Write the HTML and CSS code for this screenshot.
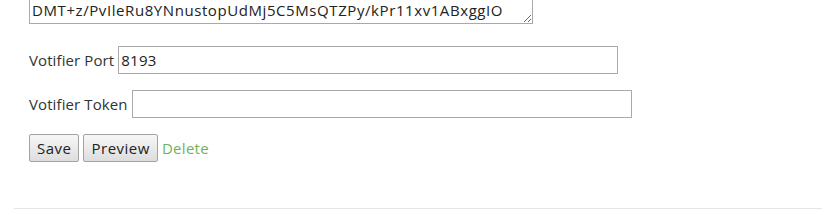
FILE: index.html
```html
<!DOCTYPE html>
<html lang="en">
<head>
    <meta charset="UTF-8">
    <meta name="viewport" content="width=device-width, initial-scale=1.0">
    <title>Server Settings</title>
    <link rel="stylesheet" href="styles.css">
</head>
<body>
    <div class="page">
        <form class="server-form">
            <textarea class="key-box" name="votifier_key">MIIBIjANBgkqhkiG9w0BAQEFAAOCAQ8AMIIBCgKCAQEAq
hT3kW9vXbR2mJ+eQfLpN7sYcZ0uKdA4gVt1oHxE8iB5
w6nRjL2yUeCqF3pMvG9aZsT0bNk/7xDhIo1Wr4tYlQe
DMT+z/PvIleRu8YNnustopUdMj5C5MsQTZPy/kPr11xv1ABxggIO</textarea>

            <div class="field">
                <label for="port">Votifier Port</label>
                <input type="text" id="port" class="text-input" value="8193">
            </div>

            <div class="field">
                <label for="token">Votifier Token</label>
                <input type="text" id="token" class="text-input" value="">
            </div>

            <div class="actions">
                <button type="button" class="btn">Save</button>
                <button type="button" class="btn">Preview</button>
                <a href="#" class="delete-link">Delete</a>
            </div>
        </form>
        <hr class="divider">
    </div>
</body>
</html>
```

FILE: styles.css
```css
body {
    font-family: "Open Sans", Arial, sans-serif;
    font-size: 15px;
    letter-spacing: 0.3px;
    color: #333;
    background-color: #fff;
    margin: 0;
}
.page {
    padding: 0 12px 0 14px;
}
.server-form {
    padding: 0 15px;
}
.key-box {
    display: block;
    box-sizing: border-box;
    width: 504px;
    height: 87px;
    margin: -63px 0 22px 0;
    padding: 2px 2px 3px 2px;
    font-family: "Open Sans", Arial, sans-serif;
    font-size: 15px;
    letter-spacing: 0.58px;
    line-height: 20px;
    color: #222;
    border: 1px solid #a9a9a9;
    white-space: pre;
    overflow-x: hidden;
    overflow-y: scroll;
}
.field {
    display: flex;
    align-items: center;
    gap: 4px;
    margin-bottom: 16px;
}
.field label {
    letter-spacing: 0.1px;
}
.text-input {
    box-sizing: border-box;
    width: 500px;
    height: 28px;
    padding: 0 2px;
    font-family: "Open Sans", Arial, sans-serif;
    font-size: 15px;
    letter-spacing: 0.3px;
    color: #222;
    border: 1px solid #a9a9a9;
}
.actions {
    display: flex;
    align-items: center;
    gap: 4px;
}
.btn {
    box-sizing: border-box;
    height: 28px;
    padding: 0 7px;
    font-family: "Open Sans", Arial, sans-serif;
    font-size: 15px;
    letter-spacing: 0.5px;
    color: #222;
    background: linear-gradient(#f7f7f7, #dddddd);
    border: 1px solid #a3a3a3;
    border-radius: 2px;
}
.delete-link {
    color: #6cb35c;
    text-decoration: none;
}
.divider {
    margin: 46px 0 0 0;
    border: none;
    border-top: 1px solid #e5e5e5;
}
```
